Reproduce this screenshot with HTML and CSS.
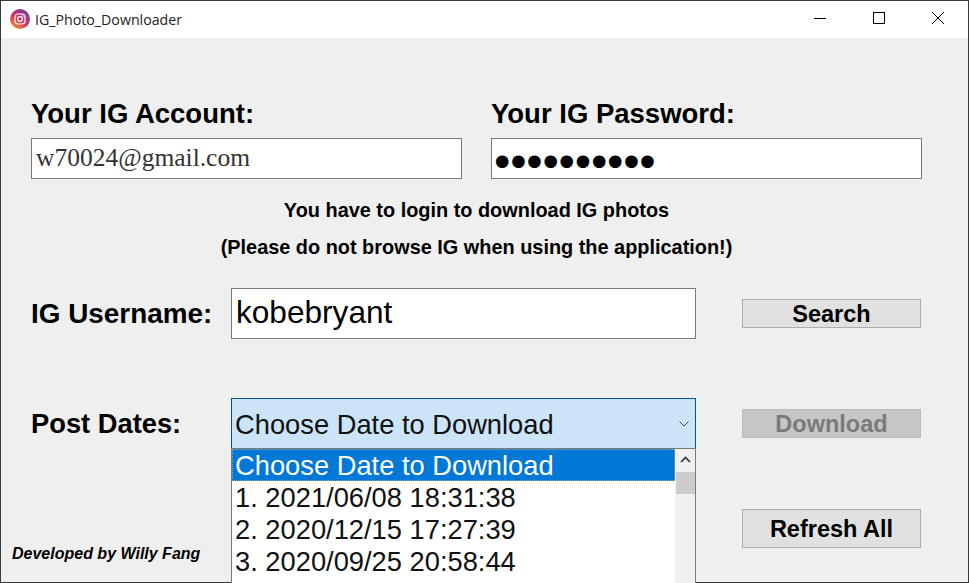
FILE: index.html
```html
<!DOCTYPE html>
<html lang="en">
<head>
<meta charset="utf-8">
<title>IG_Photo_Downloader</title>
<link rel="stylesheet" href="styles.css">
</head>
<body>
<div class="window">
  <header class="titlebar">
    <svg class="app-icon" width="20" height="20" viewBox="0 0 20 20">
      <defs>
        <linearGradient id="ig" x1="0.1" y1="1" x2="0.8" y2="0">
          <stop offset="0" stop-color="#f5a623"/>
          <stop offset="0.45" stop-color="#d9345f"/>
          <stop offset="1" stop-color="#6f3aa8"/>
        </linearGradient>
      </defs>
      <circle cx="10" cy="10" r="10" fill="url(#ig)"/>
      <rect x="5" y="5" width="10" height="10" rx="3" fill="none" stroke="#fff" stroke-width="1.2"/>
      <circle cx="10" cy="10" r="2.4" fill="none" stroke="#fff" stroke-width="1.2"/>
      <circle cx="13" cy="7" r="0.7" fill="#fff"/>
    </svg>
    <span class="app-title">IG_Photo_Downloader</span>
    <div class="controls">
      <svg class="ctl" width="12" height="12" viewBox="0 0 12 12"><path d="M0 6.5H12" stroke="#000" fill="none"/></svg>
      <svg class="ctl" width="12" height="12" viewBox="0 0 12 12"><rect x="0.5" y="0.5" width="11" height="11" stroke="#000" fill="none"/></svg>
      <svg class="ctl" width="12" height="12" viewBox="0 0 12 12"><path d="M0 0L12 12M12 0L0 12" stroke="#000" fill="none"/></svg>
    </div>
  </header>
  <main class="content">
    <section class="creds">
      <div class="cred">
        <label class="cred-label">Your IG Account:</label>
        <div class="cred-input serif">w70024@gmail.com</div>
      </div>
      <div class="cred">
        <label class="cred-label">Your IG Password:</label>
        <div class="cred-input dots">●●●●●●●●●●</div>
      </div>
    </section>
    <p class="note first">You have to login to download IG photos</p>
    <p class="note">(Please do not browse IG when using the application!)</p>
    <section class="form-row username-row">
      <label class="row-label wide">IG Username:</label>
      <div class="big-input">kobebryant</div>
      <button class="btn small">Search</button>
    </section>
    <section class="form-row dates-row">
      <label class="row-label">Post Dates:</label>
      <div class="select">
        <span class="select-text">Choose Date to Download</span>
        <svg class="chev" width="10" height="6" viewBox="0 0 10 6"><path d="M0.5 0.5L5 5L9.5 0.5" stroke="#444" fill="none"/></svg>
        <div class="dropdown">
          <ul class="options">
            <li class="opt active">Choose Date to Download</li>
            <li class="opt">1. 2021/06/08 18:31:38</li>
            <li class="opt">2. 2020/12/15 17:27:39</li>
            <li class="opt">3. 2020/09/25 20:58:44</li>
          </ul>
          <div class="scrollbar">
            <svg class="up" width="11" height="7" viewBox="0 0 11 7"><path d="M1 6L5.5 1.5L10 6" stroke="#333" stroke-width="1.6" fill="none"/></svg>
            <div class="thumb"></div>
          </div>
        </div>
      </div>
      <button class="btn small disabled" disabled>Download</button>
    </section>
    <footer class="bottom">
      <span class="credit">Developed by Willy Fang</span>
      <button class="btn large">Refresh All</button>
    </footer>
  </main>
</div>
</body>
</html>
```
FILE: styles.css
```css
* { box-sizing: border-box; }
html, body { margin: 0; height: 100%; overflow: hidden; }
body { font-family: "Liberation Sans", Arial, sans-serif; color: #000; }
.window {
  width: 969px; height: 583px; border: 1px solid #3a3a3a; background: #efefef;
  display: flex; flex-direction: column;
}
.titlebar {
  height: 37px; background: #fff; display: flex; align-items: center;
  padding-left: 9px; flex: none;
}
.app-icon { flex: none; margin-bottom: 1px; }
.app-title { margin-left: 5px; font-size: 14.2px; color: #222; font-family: "Open Sans", "Liberation Sans", sans-serif; margin-bottom: 1px; }
.controls { margin-left: auto; display: flex; align-items: center; gap: 47px; padding-right: 24px; margin-bottom: 3px; }
.ctl { display: block; }
.content { flex: 1; position: relative; min-height: 0; }
.creds { display: grid; grid-template-columns: 431px 431px; column-gap: 29px; padding: 61px 0 0 30px; }
.cred { display: flex; flex-direction: column; }
.cred-label { font-size: 27.5px; font-weight: 700; line-height: 30px; height: 39px; }
.cred-input {
  height: 41px; background: #fff; border: 1px solid #7a7a7a; padding-left: 4px;
  display: flex; align-items: center; white-space: nowrap;
}
.serif { font-family: "Liberation Serif", serif; font-size: 25.5px; color: #333; padding-bottom: 2px; }
.dots { font-family: "DejaVu Sans", sans-serif; font-size: 16.5px; letter-spacing: 1.75px; padding-left: 3px; padding-top: 3px; }
.note { margin: 0; text-align: center; font-size: 19.9px; font-weight: 700; line-height: 37px; height: 37px; width: 951px; }
.note.first { margin-top: 13px; }
.form-row { display: grid; grid-template-columns: 200px 465px 1fr; padding-left: 30px; align-items: center; }
.username-row { margin-top: 22px; }
.dates-row { margin-top: 59px; }
.row-label { font-size: 27.3px; font-weight: 700; }
.row-label.wide { font-size: 27.9px; }
.big-input {
  height: 51px; background: #fff; border: 1px solid #7a7a7a; font-size: 31.6px;
  padding: 0 0 3px 4px; display: flex; align-items: center;
}
.select {
  height: 51px; background: #cce4f7; border: 1px solid #005499; font-size: 27.3px;
  padding-left: 3px; display: flex; align-items: center; justify-content: space-between;
  padding-right: 6px; position: relative; color: #111;
}
.select-text { padding-top: 2px; }
.dropdown {
  position: absolute; left: -1px; top: 49px; width: 465px; height: 136px;
  background: #fff; border: 1px solid #7a7a7a; display: flex; z-index: 2;
}
.options { list-style: none; margin: 0; padding: 0; flex: 1; min-width: 0; overflow: hidden; }
.opt { height: 32px; line-height: 34px; padding-left: 3px; font-size: 27.3px; white-space: nowrap; }
.opt.active { background: #0078d7; color: #fff; outline: 1px dotted #8aa; outline-offset: -1px; }
.scrollbar { width: 20px; background: #f0f0f0; flex: none; display: flex; flex-direction: column; align-items: center; }
.up { margin-top: 7px; }
.thumb { width: 19px; height: 22px; background: #cdcdcd; margin-top: 9px; }
.btn { font-family: inherit; font-weight: 700; color: #000; background: #e1e1e1; border: 1px solid #adadad; padding: 1px 0 0; border-radius: 0; width: 179px; font-size: 23.5px; }
.form-row .btn { margin-left: 46px; }
.btn.small { height: 29px; line-height: 25px; }
.btn.large { height: 39px; }
.btn.disabled { background: #c6c6c6; color: #7a7a7a; border-color: #bcbcbc; }
.bottom { display: flex; justify-content: space-between; align-items: flex-start; margin-top: 60px; padding: 0 47px 0 11px; }
.credit { font-size: 16px; font-weight: 700; font-style: italic; margin-top: 36px; }
```
